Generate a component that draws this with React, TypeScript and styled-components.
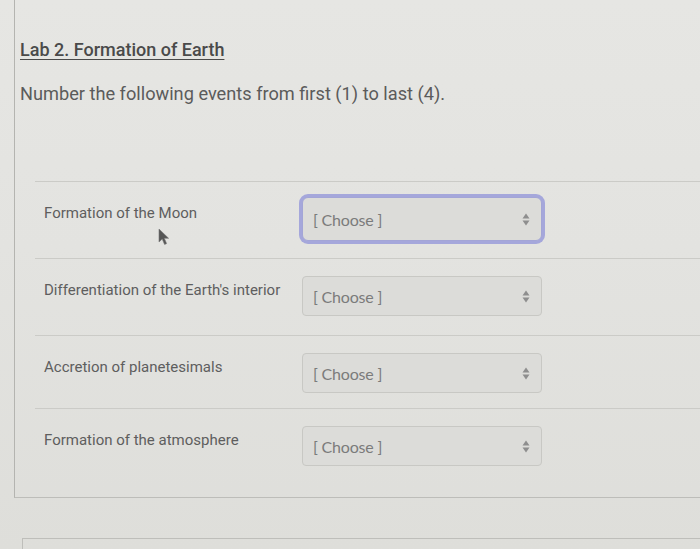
import React from 'react'
import styled, { createGlobalStyle, css } from 'styled-components'

const GlobalStyle = createGlobalStyle`
  html, body {
    margin: 0;
    padding: 0;
    background: #e3e3e0;
    font-family: Roboto, 'Liberation Sans', Arial, sans-serif;
    overflow: hidden;
  }
`

const Page = styled.div`
  position: relative;
  width: 700px;
  height: 549px;
  overflow: hidden;
  background: linear-gradient(180deg, #e6e6e3 0%, #e3e3e0 45%, #dededa 100%);
`

const Question = styled.div`
  margin-left: 14px;
  width: 720px;
  border-left: 1px solid #b4b4b0;
  border-bottom: 1px solid #bdbdb9;
`

const QuestionText = styled.div`
  padding: 38px 0 0 5px;
`

const Title = styled.div`
  font-size: 18px;
  line-height: 24px;
  font-weight: 500;
  color: #4a4a4a;
  text-decoration: underline;
  text-decoration-thickness: 1px;
  text-underline-offset: 3px;
`

const Prompt = styled.p`
  margin: 20px 0 0;
  font-size: 18.2px;
  line-height: 24px;
  color: #5b5b5b;
`

const Answers = styled.div`
  margin: 75px 0 0 20px;
`

const Row = styled.div<{ height: number }>`
  display: grid;
  grid-template-columns: 258px 240px;
  align-items: start;
  height: ${({ height }) => height}px;
  border-top: 1px solid #cbcbc7;
  padding-left: 9px;
`

const Label = styled.div`
  margin-top: 21px;
  font-size: 15px;
  line-height: 20px;
  color: #5e5e5e;
`

const Select = styled.div<{ focused?: boolean }>`
  display: flex;
  align-items: center;
  justify-content: space-between;
  box-sizing: border-box;
  height: 40px;
  margin-top: 17px;
  padding: 0 11px 0 10px;
  background: #dcdcd9;
  border: 1px solid #c8c8c4;
  border-radius: 4px;
  ${({ focused }) =>
    focused &&
    css`
      margin-top: 15px;
      height: 44px;
      border-color: #a3a5d6;
      box-shadow: 0 0 0 3px #a5a7db;
      border-radius: 6px;
    `}
`

const Placeholder = styled.span`
  font-family: Lato, 'Open Sans', sans-serif;
  font-size: 16px;
  letter-spacing: -0.2px;
  color: #7b7b7b;
`

const Arrows = styled.svg`
  width: 8px;
  height: 13px;
  fill: #8e8e8e;
`

const NextBlock = styled.div`
  margin: 40px 0 0 22px;
  height: 40px;
  border-top: 1px solid #bebeba;
  border-left: 1px solid #bebeba;
`

const Pointer = styled.svg`
  position: absolute;
  left: 158px;
  top: 228px;
  width: 12px;
  height: 18px;
`

const events = [
  { text: 'Formation of the Moon', height: 76 },
  { text: "Differentiation of the Earth's interior", height: 76 },
  { text: 'Accretion of planetesimals', height: 72 },
  { text: 'Formation of the atmosphere', height: 88 },
]

const SelectArrows = () => (
  <Arrows viewBox="0 0 8 13">
    <path d="M4 0.5 L7.5 5.5 H0.5 Z" />
    <path d="M0.5 7.5 H7.5 L4 12.5 Z" />
  </Arrows>
)

export default function App() {
  return (
    <Page>
      <GlobalStyle />
      <Question>
        <QuestionText>
          <Title>Lab 2. Formation of Earth</Title>
          <Prompt>Number the following events from first (1) to last (4).</Prompt>
        </QuestionText>
        <Answers>
          {events.map(({ text, height }, i) => (
            <Row key={text} height={height}>
              <Label>{text}</Label>
              <Select focused={i === 0}>
                <Placeholder>[ Choose ]</Placeholder>
                <SelectArrows />
              </Select>
            </Row>
          ))}
        </Answers>
      </Question>
      <NextBlock />
      <Pointer viewBox="0 0 12 18">
        <path
          d="M1 1 L1 14 L4.2 11 L6.6 16.5 L8.6 15.6 L6.3 10.3 L10.6 10.3 Z"
          fill="#555"
          stroke="#777"
          strokeWidth="0.6"
        />
      </Pointer>
    </Page>
  )
}
